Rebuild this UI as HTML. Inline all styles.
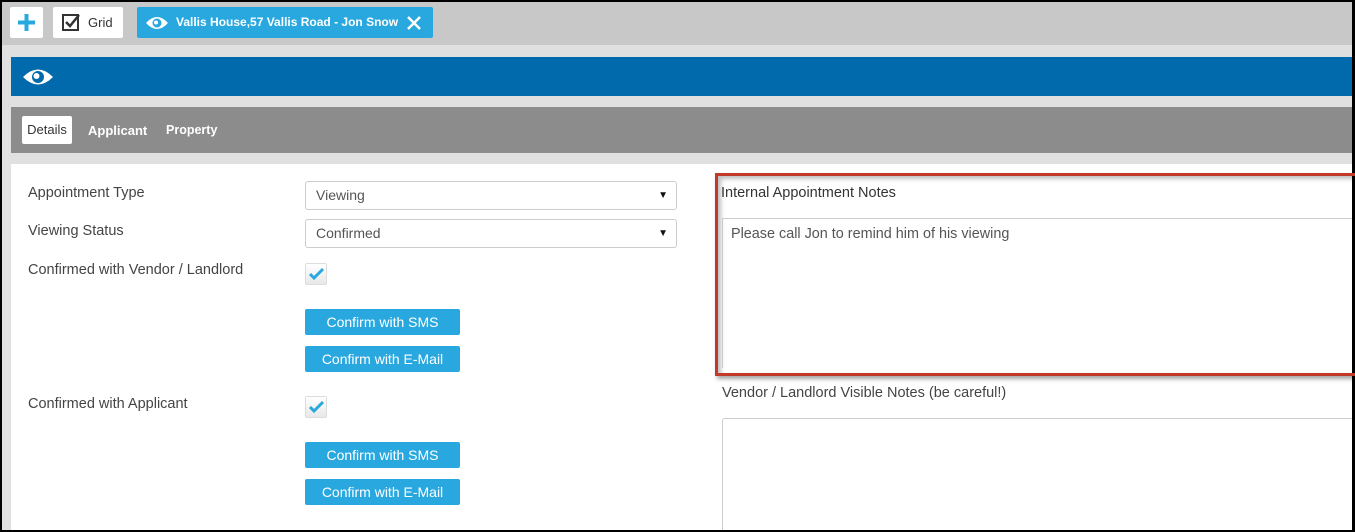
<!DOCTYPE html>
<html><head><meta charset="utf-8"><style>
*{box-sizing:border-box;margin:0;padding:0}
body{width:1355px;height:532px;position:relative;overflow:hidden;background:#000;font-family:"Liberation Sans",sans-serif;font-size:13px;color:#444}
.a{position:absolute}
.btn{position:absolute;background:#29a8e0;color:#fff;border-radius:2px;font-size:14px;text-align:center;line-height:26px;height:26px;width:155px}
.sel{position:absolute;left:305px;width:372px;height:29px;border:1px solid #ccc;border-radius:3px;background:#fff;padding:0 10px;line-height:27px;font-size:14px;color:#555}
.sel:after{content:"▼";position:absolute;right:8px;top:0;font-size:10px;color:#111}
.cb{position:absolute;left:305px;width:22px;height:22px;border:1px solid #ddd;border-radius:2px;background:linear-gradient(#fff,#e8e8e8)}
.lbl{position:absolute;left:28px;font-size:14.5px;color:#444}
</style></head><body>
<div class="a" style="left:2px;top:2px;width:1350px;height:528px;background:#e0e0e0"></div>
<div class="a" style="left:2px;top:2px;width:1350px;height:43px;background:#c8c8c8"></div>
<div class="a" style="left:10px;top:7px;width:33px;height:31px;background:#fff;border-radius:2px">
<svg width="33" height="31"><path d="M16.5 7v17M8 15.5h17" stroke="#29a8e0" stroke-width="4"/></svg></div>
<div class="a" style="left:53px;top:7px;width:70px;height:31px;background:#fff;border-radius:2px">
<svg class="a" style="left:8px;top:6px" width="20" height="20"><rect x="2" y="2" width="15" height="15" fill="none" stroke="#333" stroke-width="2"/><path d="M5 9l4 4 9-11" fill="none" stroke="#333" stroke-width="2.5"/></svg>
<span class="a" style="left:35px;top:8px;font-size:13px;color:#333">Grid</span></div>
<div class="a" style="left:137px;top:7px;width:296px;height:31px;background:#29a8e0;border-radius:2px;color:#fff">
<svg class="a" style="left:8px;top:8px" width="24" height="16"><path d="M1 8Q12 -4 23 8Q12 20 1 8Z" fill="#fff"/><circle cx="12" cy="8" r="4.5" fill="#29a8e0"/><circle cx="11" cy="7.5" r="2" fill="#fff"/></svg>
<span class="a" style="left:39px;top:8px;font-size:12px;font-weight:bold;white-space:nowrap">Vallis House,57 Vallis Road - Jon Snow</span>
<svg class="a" style="left:270px;top:9px" width="14" height="14"><path d="M1 1l12 12M13 1L1 13" stroke="#fff" stroke-width="2.5"/></svg></div>
<div class="a" style="left:11px;top:57px;width:1341px;height:39px;background:#006aad"></div>
<svg class="a" style="left:22px;top:68px" width="32" height="18"><path d="M1 9Q16 -6 31 9Q16 24 1 9Z" fill="#fff"/><circle cx="16" cy="9" r="6" fill="#006aad"/><circle cx="14.5" cy="8" r="3" fill="#fff"/></svg>
<div class="a" style="left:11px;top:107px;width:1341px;height:46px;background:#8c8c8c"></div>
<div class="a" style="left:22px;top:116px;width:50px;height:28px;background:#fff;border-radius:2px;line-height:28px;text-align:center;font-size:13px;color:#333">Details</div>
<span class="a" style="left:88px;top:123px;color:#fff;font-weight:bold;font-size:13px">Applicant</span>
<span class="a" style="left:166px;top:123px;color:#fff;font-weight:bold;font-size:12.5px">Property</span>
<div class="a" style="left:11px;top:164px;width:1341px;height:366px;background:#fff"></div>
<span class="lbl" style="top:185px">Appointment Type</span>
<span class="lbl" style="top:223px">Viewing Status</span>
<span class="lbl" style="top:262px">Confirmed with Vendor / Landlord</span>
<span class="lbl" style="top:396px">Confirmed with Applicant</span>
<div class="sel" style="top:181px">Viewing</div>
<div class="sel" style="top:219px">Confirmed</div>
<div class="cb" style="top:263px"><svg width="20" height="20"><path d="M4 10l4 4 9-9" fill="none" stroke="#29a8e0" stroke-width="3"/></svg></div>
<div class="cb" style="top:396px"><svg width="20" height="20"><path d="M4 10l4 4 9-9" fill="none" stroke="#29a8e0" stroke-width="3"/></svg></div>
<div class="btn" style="left:305px;top:309px">Confirm with SMS</div>
<div class="btn" style="left:305px;top:346px">Confirm with E-Mail</div>
<div class="btn" style="left:305px;top:442px">Confirm with SMS</div>
<div class="btn" style="left:305px;top:479px">Confirm with E-Mail</div>
<div class="a" style="left:715px;top:173px;width:640px;height:203px;border:3px solid #c0392b;border-right:none;box-shadow:2px 3px 4px rgba(0,0,0,.35), inset 3px 3px 4px rgba(0,0,0,.25)"></div>
<span class="a" style="left:721px;top:185px;font-size:14.5px;color:#333">Internal Appointment Notes</span>
<div class="a" style="left:722px;top:218px;width:630px;height:150px;border:1px solid #ccc;border-right:none;border-bottom:none"></div>
<span class="a" style="left:731px;top:226px;font-size:14.4px;color:#555">Please call Jon to remind him of his viewing</span>
<span class="a" style="left:722px;top:385px;font-size:14.5px;color:#444">Vendor / Landlord Visible Notes (be careful!)</span>
<div class="a" style="left:722px;top:418px;width:630px;height:112px;border:1px solid #ccc;border-right:none;border-bottom:none;border-radius:3px 0 0 0"></div>
</body></html>
